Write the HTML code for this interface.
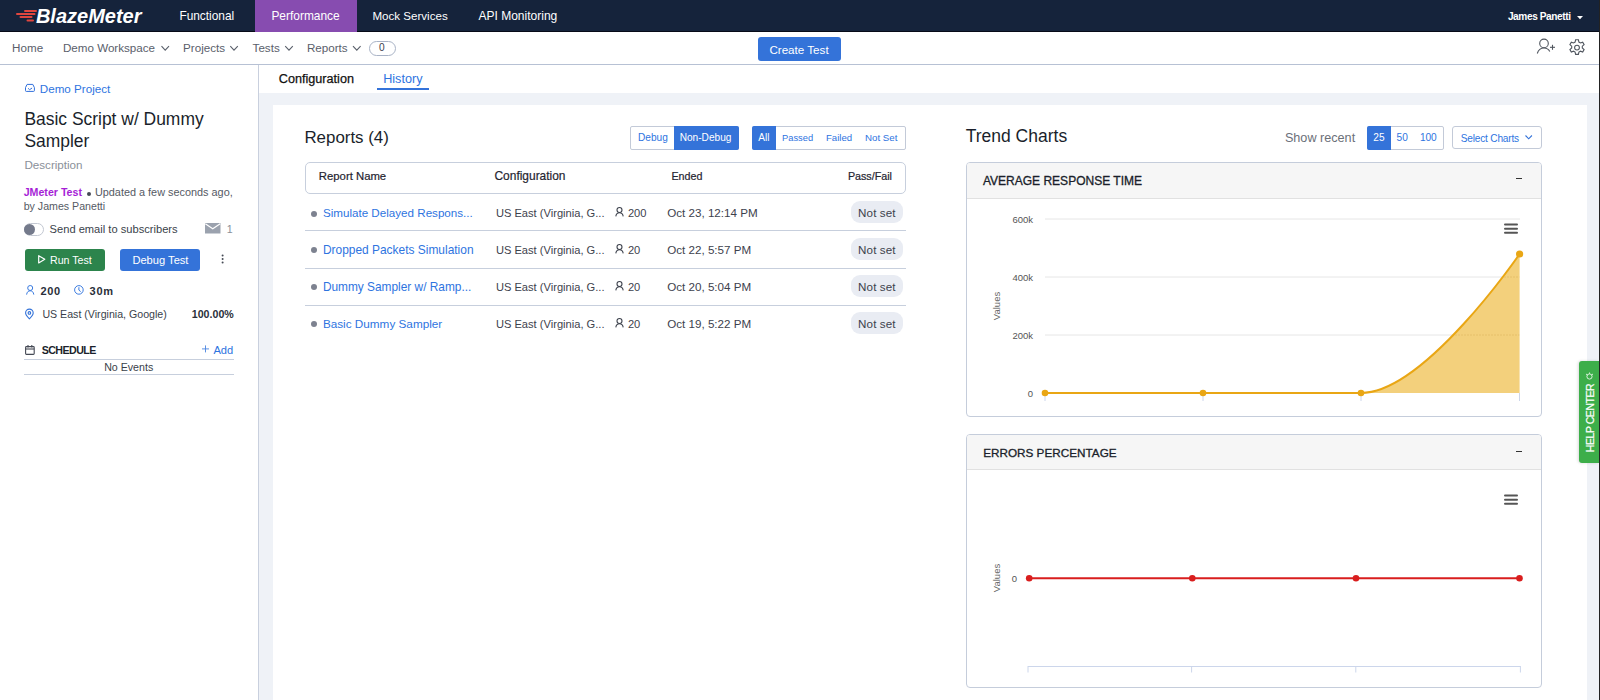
<!DOCTYPE html>
<html><head><meta charset="utf-8">
<style>
*{box-sizing:border-box;margin:0;padding:0}
html,body{width:1600px;height:700px;overflow:hidden;background:#fff;font-family:"Liberation Sans",sans-serif;color:#1f2430}
.a{position:absolute;white-space:nowrap;line-height:1}
.box{position:absolute}
svg{position:absolute;overflow:visible}
.pill{position:absolute;left:851px;width:52px;height:21.5px;border-radius:9px;background:#e9ecf3}
.sep{position:absolute;left:305px;width:601px;height:1px;background:#c7cfdd}
</style></head><body>
<!-- top nav -->
<div class="box" style="left:0;top:0;width:1600px;height:32px;background:#15233b;border-bottom:1px solid #070b18"></div>
<div class="box" style="left:255px;top:0;width:102px;height:31.5px;background:#874cb0"></div>
<svg style="left:0;top:0" width="40" height="32">
 <g stroke="#e0463f" stroke-width="2" stroke-linecap="round">
  <line x1="25" y1="11" x2="36" y2="11"/>
  <line x1="17" y1="14" x2="34.5" y2="14"/>
  <line x1="20.5" y1="17" x2="31.5" y2="17"/>
  <line x1="27.5" y1="20.5" x2="33" y2="20.5"/>
 </g>
</svg>
<svg style="left:1577px;top:16px" width="6" height="4"><path d="M0 0 L6 0 L3 3.3 Z" fill="#fff"/></svg>

<!-- sub nav -->
<div class="box" style="left:0;top:64px;width:1600px;height:1px;background:#b7c1d4"></div>
<svg style="left:0;top:0" width="400" height="64"><g fill="none" stroke="#5a606b" stroke-width="1.1">
 <polyline points="161.5,46.2 165.2,50.2 169,46.2"/>
 <polyline points="230.3,46.2 234,50.2 237.8,46.2"/>
 <polyline points="285.2,46.2 289,50.2 292.8,46.2"/>
 <polyline points="353,46.2 356.8,50.2 360.6,46.2"/>
</g></svg>
<div class="box" style="left:369px;top:41px;width:27px;height:15px;border:1px solid #a9b3c6;border-radius:8px"></div>
<div class="box" style="left:758px;top:37px;width:83px;height:24px;background:#3473d9;border-radius:3px"></div>
<svg style="left:1536px;top:38px" width="20" height="17"><g fill="none" stroke="#50565f" stroke-width="1.1">
 <circle cx="8" cy="5.4" r="4.3"/>
 <path d="M1.3 15.5 C2.5 11.5 5 10 8 10 C10.5 10 12.5 11.2 13.8 13.5"/>
 <line x1="14" y1="9.3" x2="19" y2="9.3"/><line x1="16.5" y1="6.8" x2="16.5" y2="11.8"/>
</g></svg>
<svg style="left:1568px;top:38.5px" width="18" height="18"><g fill="none" stroke="#50565f" stroke-width="1.1">
 <path d="M7.6 0.8 h2.8 l0.5 2.3 l1.6 0.9 l2.2 -0.8 l1.4 2.4 l-1.8 1.6 v1.8 l1.8 1.6 l-1.4 2.4 l-2.2 -0.8 l-1.6 0.9 l-0.5 2.3 h-2.8 l-0.5 -2.3 l-1.6 -0.9 l-2.2 0.8 l-1.4 -2.4 l1.8 -1.6 v-1.8 l-1.8 -1.6 l1.4 -2.4 l2.2 0.8 l1.6 -0.9 z"/>
 <circle cx="9" cy="8.6" r="2.4"/>
</g></svg>

<!-- sidebar -->
<div class="box" style="left:258px;top:65px;width:1px;height:635px;background:#c9d0de"></div>
<svg style="left:24px;top:83px" width="12" height="10"><g fill="none" stroke="#2f6fdc" stroke-width="1" stroke-linejoin="round">
 <path d="M3.1 1.4 H8.8 L10.4 4.6 V7.6 Q10.4 8.4 9.6 8.4 H2.3 Q1.5 8.4 1.5 7.6 V4.6 Z"/><path d="M4.1 5.3 L5.6 6.7 L8.1 5"/>
</g></svg>
<div class="box" style="left:86.5px;top:191.5px;width:4px;height:4px;border-radius:2px;background:#454a55"></div>
<div class="box" style="left:23.5px;top:223px;width:20px;height:12.5px;border:1px solid #c3c8d2;border-radius:7px"></div>
<div class="box" style="left:23.6px;top:223.6px;width:11.4px;height:11.4px;border-radius:6px;background:#747a8b"></div>
<svg style="left:204.5px;top:223px" width="16" height="11"><path d="M0 0 H15.5 V10.5 H0 Z" fill="#9ba2ae"/><path d="M0.3 0.8 L7.75 5.8 L15.2 0.8" fill="none" stroke="#fff" stroke-width="1.2"/></svg>
<div class="box" style="left:24.5px;top:249px;width:80px;height:22px;background:#2c844c;border-radius:3px"></div>
<svg style="left:37.5px;top:255px" width="8" height="9"><path d="M0.7 0.7 L6.8 4.3 L0.7 7.9 Z" fill="none" stroke="#fff" stroke-width="1.2" stroke-linejoin="round"/></svg>
<div class="box" style="left:120px;top:249px;width:80px;height:22px;background:#3473d9;border-radius:3px"></div>
<svg style="left:221px;top:254px" width="4" height="11"><g fill="#454a55"><circle cx="1.6" cy="1.6" r="1"/><circle cx="1.6" cy="5" r="1"/><circle cx="1.6" cy="8.4" r="1"/></g></svg>
<svg style="left:26px;top:285px" width="10" height="10"><g fill="none" stroke="#3a7be0" stroke-width="1"><circle cx="4.2" cy="3" r="2.5"/><path d="M0.6 9.6 C1 6.8 2.4 5.8 4.2 5.8 C6 5.8 7.4 6.8 7.8 9.6"/></g></svg>
<svg style="left:74px;top:285px" width="11" height="11"><g fill="none" stroke="#3a7be0" stroke-width="1"><circle cx="4.9" cy="4.9" r="4.3"/><path d="M4.9 2.2 V5.1 L6.7 6.6"/></g></svg>
<svg style="left:25px;top:308.5px" width="10" height="11"><g fill="none" stroke="#3473d9" stroke-width="1.1"><path d="M4.4 9.8 C1.5 6.8 0.6 5.2 0.6 3.9 A3.8 3.8 0 0 1 8.2 3.9 C8.2 5.2 7.3 6.8 4.4 9.8 Z"/><circle cx="4.4" cy="3.9" r="1.3"/></g></svg>
<svg style="left:25px;top:344.5px" width="10" height="10"><g fill="none" stroke="#454a55" stroke-width="1.1"><rect x="0.6" y="1.6" width="8.6" height="7.8" rx="0.8"/><line x1="0.6" y1="4" x2="9.2" y2="4"/><line x1="3" y1="0" x2="3" y2="2.5"/><line x1="6.8" y1="0" x2="6.8" y2="2.5"/></g></svg>
<svg style="left:201.5px;top:345px" width="8" height="8"><g stroke="#4a84e0" stroke-width="0.9"><line x1="0" y1="3.9" x2="7" y2="3.9"/><line x1="3.5" y1="0.4" x2="3.5" y2="7.4"/></g></svg>
<div class="box" style="left:24.3px;top:359px;width:209.4px;height:1px;background:#c7cfdd"></div>
<div class="box" style="left:24.3px;top:374px;width:209.4px;height:1px;background:#c7cfdd"></div>

<!-- main -->
<div class="box" style="left:259px;top:93px;width:1340px;height:607px;background:#eff2f7"></div>
<div class="box" style="left:273px;top:105px;width:1314px;height:600px;background:#fff"></div>
<div class="box" style="left:377px;top:88px;width:52px;height:2px;background:#3473d9"></div>

<div class="box" style="left:630px;top:126px;width:109px;height:23.5px;border:1px solid #c3cad8;border-radius:2px"></div>
<div class="box" style="left:674px;top:126px;width:65px;height:23.5px;background:#3473d9;border-radius:0 2px 2px 0"></div>
<div class="box" style="left:752px;top:125.5px;width:154px;height:24px;border:1px solid #c3cad8;border-radius:2px"></div>
<div class="box" style="left:752px;top:125.5px;width:24px;height:24px;background:#3473d9;border-radius:2px 0 0 2px"></div>
<div class="box" style="left:305px;top:162px;width:601px;height:32px;border:1px solid #c7cfdd;border-radius:5px"></div>
<div class="sep" style="top:230px"></div>
<div class="sep" style="top:268px"></div>
<div class="sep" style="top:305px"></div>
<div class="box" style="left:311px;top:210.5px;width:6px;height:6px;border-radius:3px;background:#7d8290"></div>
<svg style="left:614.5px;top:206.9px" width="10" height="10"><g fill="none" stroke="#3d424d" stroke-width="1.1"><circle cx="4.5" cy="3" r="2.5"/><path d="M0.8 9.4 C1.2 6.8 2.6 5.8 4.5 5.8 C6.4 5.8 7.8 6.8 8.2 9.4"/></g></svg>
<div class="pill" style="top:201.4px"></div>
<div class="box" style="left:311px;top:247.1px;width:6px;height:6px;border-radius:3px;background:#7d8290"></div>
<svg style="left:614.5px;top:243.5px" width="10" height="10"><g fill="none" stroke="#3d424d" stroke-width="1.1"><circle cx="4.5" cy="3" r="2.5"/><path d="M0.8 9.4 C1.2 6.8 2.6 5.8 4.5 5.8 C6.4 5.8 7.8 6.8 8.2 9.4"/></g></svg>
<div class="pill" style="top:238.0px"></div>
<div class="box" style="left:311px;top:284.2px;width:6px;height:6px;border-radius:3px;background:#7d8290"></div>
<svg style="left:614.5px;top:280.6px" width="10" height="10"><g fill="none" stroke="#3d424d" stroke-width="1.1"><circle cx="4.5" cy="3" r="2.5"/><path d="M0.8 9.4 C1.2 6.8 2.6 5.8 4.5 5.8 C6.4 5.8 7.8 6.8 8.2 9.4"/></g></svg>
<div class="pill" style="top:275.1px"></div>
<div class="box" style="left:311px;top:321.1px;width:6px;height:6px;border-radius:3px;background:#7d8290"></div>
<svg style="left:614.5px;top:317.5px" width="10" height="10"><g fill="none" stroke="#3d424d" stroke-width="1.1"><circle cx="4.5" cy="3" r="2.5"/><path d="M0.8 9.4 C1.2 6.8 2.6 5.8 4.5 5.8 C6.4 5.8 7.8 6.8 8.2 9.4"/></g></svg>
<div class="pill" style="top:312.0px"></div>

<!-- trend charts -->
<div class="box" style="left:1367px;top:126px;width:77px;height:24px;border:1px solid #c3cad8;border-radius:2px"></div>
<div class="box" style="left:1367px;top:126px;width:24px;height:24px;background:#3473d9;border-radius:2px 0 0 2px"></div>
<div class="box" style="left:1452px;top:126px;width:90px;height:23px;border:1px solid #c3cad8;border-radius:3px"></div>
<svg style="left:1525px;top:135px" width="8" height="5"><polyline points="0.5,0.5 3.7,3.8 6.9,0.5" fill="none" stroke="#3473d9" stroke-width="1.1"/></svg>

<div class="box" style="left:966px;top:162px;width:576px;height:255px;border:1px solid #c5cddb;border-radius:4px;overflow:hidden">
  <div class="box" style="left:0;top:0;width:574px;height:36px;background:#f6f6f6;border-bottom:1px solid #e1e1e1"></div>
</div>
<div class="box" style="left:1516px;top:178px;width:6px;height:1.2px;background:#333"></div>
<div class="box" style="left:966px;top:434px;width:576px;height:254px;border:1px solid #c5cddb;border-radius:4px;overflow:hidden">
  <div class="box" style="left:0;top:0;width:574px;height:35px;background:#f6f6f6;border-bottom:1px solid #e1e1e1"></div>
</div>
<div class="box" style="left:1516px;top:451px;width:6px;height:1.2px;background:#333"></div>
<svg style="left:0;top:0" width="1600" height="700">
 <g stroke="#e6e6e6" stroke-width="1">
  <line x1="1045" y1="219" x2="1520" y2="219"/>
  <line x1="1045" y1="277" x2="1520" y2="277"/>
  <line x1="1045" y1="335" x2="1520" y2="335"/>
 </g>
 <g stroke="#ccd6eb" stroke-width="1">
  <line x1="1045" y1="393" x2="1045" y2="401"/>
  <line x1="1203" y1="393" x2="1203" y2="401"/>
  <line x1="1361" y1="393" x2="1361" y2="401"/>
  <line x1="1519.5" y1="393" x2="1519.5" y2="401"/>
 </g>
 <path d="M1361,393 C1424.4,393 1519.6,254 1519.6,254 L1519.6,393 Z" fill="#f3d07c"/>
 <path d="M1045,393 L1361,393 C1424.4,393 1519.6,254 1519.6,254" fill="none" stroke="#e9a614" stroke-width="2"/>
 <g stroke="#e0b860" stroke-width="1" stroke-dasharray="2,1" opacity="0.6"><line x1="1455" y1="335" x2="1519" y2="335"/><line x1="1504" y1="277" x2="1519" y2="277"/></g>
 <g fill="#e9a614">
  <circle cx="1045" cy="393" r="3.3"/><circle cx="1203" cy="393" r="3.3"/><circle cx="1361" cy="393" r="3.3"/><circle cx="1519.6" cy="254" r="3.6"/>
 </g>
 <g fill="#555">
  <rect x="1504" y="223.6" width="14" height="2" rx="1"/><rect x="1504" y="227.7" width="14" height="2" rx="1"/><rect x="1504" y="231.7" width="14" height="2" rx="1"/>
  <rect x="1504" y="494.6" width="14" height="2" rx="1"/><rect x="1504" y="498.7" width="14" height="2" rx="1"/><rect x="1504" y="502.7" width="14" height="2" rx="1"/>
 </g>
 <g font-family="Liberation Sans" font-size="9.5" fill="#555" text-anchor="end">
  <text x="1033" y="223">600k</text><text x="1033" y="281">400k</text><text x="1033" y="339">200k</text><text x="1033" y="397">0</text>
  <text x="1017" y="582">0</text>
 </g>
 <g font-family="Liberation Sans" font-size="9.5" fill="#666" text-anchor="middle">
  <text transform="translate(1000,306) rotate(-90)">Values</text>
  <text transform="translate(1000,578) rotate(-90)">Values</text>
 </g>
 <line x1="1028" y1="666.5" x2="1520.5" y2="666.5" stroke="#ccd6eb"/>
 <g stroke="#ccd6eb" stroke-width="1">
  <line x1="1028" y1="666" x2="1028" y2="672.5"/>
  <line x1="1191.6" y1="666" x2="1191.6" y2="672.5"/>
  <line x1="1355.8" y1="666" x2="1355.8" y2="672.5"/>
  <line x1="1520.4" y1="666" x2="1520.4" y2="672.5"/>
 </g>
 <line x1="1029.2" y1="578.2" x2="1519.5" y2="578.2" stroke="#d91e1e" stroke-width="2"/>
 <g fill="#d91e1e">
  <circle cx="1029.2" cy="578.2" r="3.3"/><circle cx="1192.3" cy="578.2" r="3.3"/><circle cx="1356" cy="578.2" r="3.3"/><circle cx="1519.5" cy="578.2" r="3.3"/>
 </g>
</svg>

<!-- help center -->
<div class="box" style="left:1579px;top:361px;width:20px;height:102px;background:#3dae4a;border-radius:3px 0 0 3px;box-shadow:-1px 0 3px rgba(0,0,0,0.15)"></div>
<div class="a" style="left:1589.5px;top:418px;font-size:10.5px;letter-spacing:-0.45px;color:#fff;-webkit-text-stroke:0.2px #fff;transform:translate(-50%,-50%) rotate(-90deg)">HELP CENTER</div>
<svg style="left:1585px;top:372px" width="9" height="9"><g fill="none" stroke="#e8f6e9" stroke-width="0.9"><circle cx="4.5" cy="4.5" r="2.6"/><path d="M1 2 L2.5 3 M8 2 L6.5 3 M4.5 0.5 V1.8"/></g></svg>
<div class="box" style="left:1599px;top:0;width:1px;height:700px;background:#222"></div>

<div class="a" style="left:179.40px;top:11px;font-size:11.89px;color:#fff">Functional</div>
<div class="a" style="left:271.40px;top:11px;font-size:11.94px;color:#fff">Performance</div>
<div class="a" style="left:372.40px;top:11px;font-size:11.59px;color:#fff">Mock Services</div>
<div class="a" style="left:478.40px;top:10px;font-size:12.04px;color:#fff">API Monitoring</div>
<div class="a" style="left:1507.90px;top:12px;font-size:10.12px;color:#fff;font-weight:700;letter-spacing:-0.4px">James Panetti</div>
<div class="a" style="left:35.90px;top:6px;font-size:20px;color:#fff;font-weight:700;font-style:italic;letter-spacing:0px">BlazeMeter</div>
<div class="a" style="left:12.10px;top:42px;font-size:11.64px;color:#5a606b">Home</div>
<div class="a" style="left:62.90px;top:42px;font-size:11.64px;color:#5a606b">Demo Workspace</div>
<div class="a" style="left:183.10px;top:42px;font-size:11.64px;color:#5a606b">Projects</div>
<div class="a" style="left:252.60px;top:42px;font-size:11.64px;color:#5a606b">Tests</div>
<div class="a" style="left:306.90px;top:42px;font-size:11.64px;color:#5a606b">Reports</div>
<div class="a" style="left:379.00px;top:43px;font-size:10.12px;color:#3d424d">0</div>
<div class="a" style="left:769.40px;top:44px;font-size:11.64px;color:#fff">Create Test</div>
<div class="a" style="left:39.80px;top:83px;font-size:11.64px;color:#2e74df">Demo Project</div>
<div class="a" style="left:24.40px;top:111px;font-size:17.45px;color:#1a1f2b">Basic Script w/ Dummy</div>
<div class="a" style="left:24.40px;top:133px;font-size:17.45px;color:#1a1f2b">Sampler</div>
<div class="a" style="left:24.40px;top:159px;font-size:11.64px;color:#8a8f99">Description</div>
<div class="a" style="left:23.70px;top:187px;font-size:10.63px;color:#a61fd6;font-weight:700">JMeter Test</div>
<div class="a" style="left:94.90px;top:187px;font-size:10.88px;color:#555a64">Updated a few seconds ago,</div>
<div class="a" style="left:23.70px;top:201px;font-size:10.63px;color:#555a64">by James Panetti</div>
<div class="a" style="left:49.60px;top:224px;font-size:11.13px;color:#3a3f4a">Send email to subscribers</div>
<div class="a" style="left:226.80px;top:224px;font-size:10.63px;color:#8a8f99">1</div>
<div class="a" style="left:50.00px;top:255px;font-size:10.63px;color:#fff">Run Test</div>
<div class="a" style="left:132.40px;top:255px;font-size:11.13px;color:#fff">Debug Test</div>
<div class="a" style="left:40.50px;top:286px;font-size:11.03px;color:#2a2f3a;font-weight:700;letter-spacing:0.6px">200</div>
<div class="a" style="left:89.60px;top:286px;font-size:11.03px;color:#2a2f3a;font-weight:700;letter-spacing:0.75px">30m</div>
<div class="a" style="left:42.40px;top:309px;font-size:10.63px;color:#3a3f4a">US East (Virginia, Google)</div>
<div class="a" style="left:191.80px;top:309px;font-size:10.63px;color:#2a2f3a;font-weight:700">100.00%</div>
<div class="a" style="left:41.70px;top:345px;font-size:10.63px;color:#1a1f2b;font-weight:700;letter-spacing:-0.55px">SCHEDULE</div>
<div class="a" style="left:213.40px;top:345px;font-size:11.13px;color:#2e74df">Add</div>
<div class="a" style="left:104.20px;top:362px;font-size:10.63px;color:#3a3f4a">No Events</div>
<div class="a" style="left:278.80px;top:73px;font-size:12.65px;color:#111;-webkit-text-stroke:0.25px #111">Configuration</div>
<div class="a" style="left:383.15px;top:73px;font-size:12.65px;color:#2e74df">History</div>
<div class="a" style="left:304.40px;top:130px;font-size:16.9px;color:#1a1f2b">Reports (4)</div>
<div class="a" style="left:638.00px;top:133px;font-size:10.12px;color:#2e74df">Debug</div>
<div class="a" style="left:679.70px;top:133px;font-size:10.12px;color:#fff">Non-Debug</div>
<div class="a" style="left:758.20px;top:133px;font-size:10.12px;color:#fff">All</div>
<div class="a" style="left:782.10px;top:134px;font-size:9.31px;color:#2e74df">Passed</div>
<div class="a" style="left:826.00px;top:133px;font-size:9.61px;color:#2e74df">Failed</div>
<div class="a" style="left:865.00px;top:133px;font-size:9.72px;color:#2e74df">Not Set</div>
<div class="a" style="left:318.80px;top:171px;font-size:11.33px;color:#1f2430;-webkit-text-stroke:0.2px #1f2430">Report Name</div>
<div class="a" style="left:494.50px;top:171px;font-size:11.94px;color:#1f2430;-webkit-text-stroke:0.2px #1f2430">Configuration</div>
<div class="a" style="left:671.40px;top:171px;font-size:10.73px;color:#1f2430;-webkit-text-stroke:0.2px #1f2430">Ended</div>
<div class="a" style="left:847.90px;top:171px;font-size:10.73px;color:#1f2430;-webkit-text-stroke:0.2px #1f2430">Pass/Fail</div>
<div class="a" style="left:322.90px;top:207px;font-size:11.64px;color:#2e74df">Simulate Delayed Respons...</div>
<div class="a" style="left:495.90px;top:208px;font-size:11.13px;color:#3d424d">US East (Virginia, G...</div>
<div class="a" style="left:627.90px;top:208px;font-size:11.13px;color:#3d424d">200</div>
<div class="a" style="left:667.20px;top:207px;font-size:11.64px;color:#3d424d">Oct 23, 12:14 PM</div>
<div class="a" style="left:858.10px;top:207px;font-size:11.64px;color:#3d424d;letter-spacing:0.1px">Not set</div>
<div class="a" style="left:322.90px;top:245px;font-size:11.94px;color:#2e74df">Dropped Packets Simulation</div>
<div class="a" style="left:495.90px;top:245px;font-size:11.13px;color:#3d424d">US East (Virginia, G...</div>
<div class="a" style="left:627.90px;top:245px;font-size:11.13px;color:#3d424d">20</div>
<div class="a" style="left:667.20px;top:244px;font-size:11.64px;color:#3d424d">Oct 22, 5:57 PM</div>
<div class="a" style="left:858.10px;top:244px;font-size:11.64px;color:#3d424d;letter-spacing:0.1px">Not set</div>
<div class="a" style="left:322.90px;top:282px;font-size:11.89px;color:#2e74df">Dummy Sampler w/ Ramp...</div>
<div class="a" style="left:495.90px;top:282px;font-size:11.13px;color:#3d424d">US East (Virginia, G...</div>
<div class="a" style="left:627.90px;top:282px;font-size:11.13px;color:#3d424d">20</div>
<div class="a" style="left:667.20px;top:281px;font-size:11.64px;color:#3d424d">Oct 20, 5:04 PM</div>
<div class="a" style="left:858.10px;top:281px;font-size:11.64px;color:#3d424d;letter-spacing:0.1px">Not set</div>
<div class="a" style="left:322.90px;top:318px;font-size:11.74px;color:#2e74df">Basic Dummy Sampler</div>
<div class="a" style="left:495.90px;top:319px;font-size:11.13px;color:#3d424d">US East (Virginia, G...</div>
<div class="a" style="left:627.90px;top:319px;font-size:11.13px;color:#3d424d">20</div>
<div class="a" style="left:667.20px;top:318px;font-size:11.64px;color:#3d424d">Oct 19, 5:22 PM</div>
<div class="a" style="left:858.10px;top:318px;font-size:11.64px;color:#3d424d;letter-spacing:0.1px">Not set</div>
<div class="a" style="left:965.70px;top:128px;font-size:17.5px;color:#1a1f2b">Trend Charts</div>
<div class="a" style="left:1284.90px;top:132px;font-size:12.65px;color:#6b7079">Show recent</div>
<div class="a" style="left:1373.30px;top:133px;font-size:10.12px;color:#fff">25</div>
<div class="a" style="left:1396.60px;top:133px;font-size:10.12px;color:#2e74df">50</div>
<div class="a" style="left:1420.00px;top:133px;font-size:10.12px;color:#2e74df;letter-spacing:-0.15px">100</div>
<div class="a" style="left:1460.80px;top:134px;font-size:10.12px;color:#2e74df;letter-spacing:-0.2px">Select Charts</div>
<div class="a" style="left:982.90px;top:175px;font-size:12.02px;color:#1a1f2b;-webkit-text-stroke:0.3px #1a1f2b">AVERAGE RESPONSE TIME</div>
<div class="a" style="left:983.15px;top:447px;font-size:11.74px;color:#1a1f2b;-webkit-text-stroke:0.3px #1a1f2b">ERRORS PERCENTAGE</div>
</body></html>
